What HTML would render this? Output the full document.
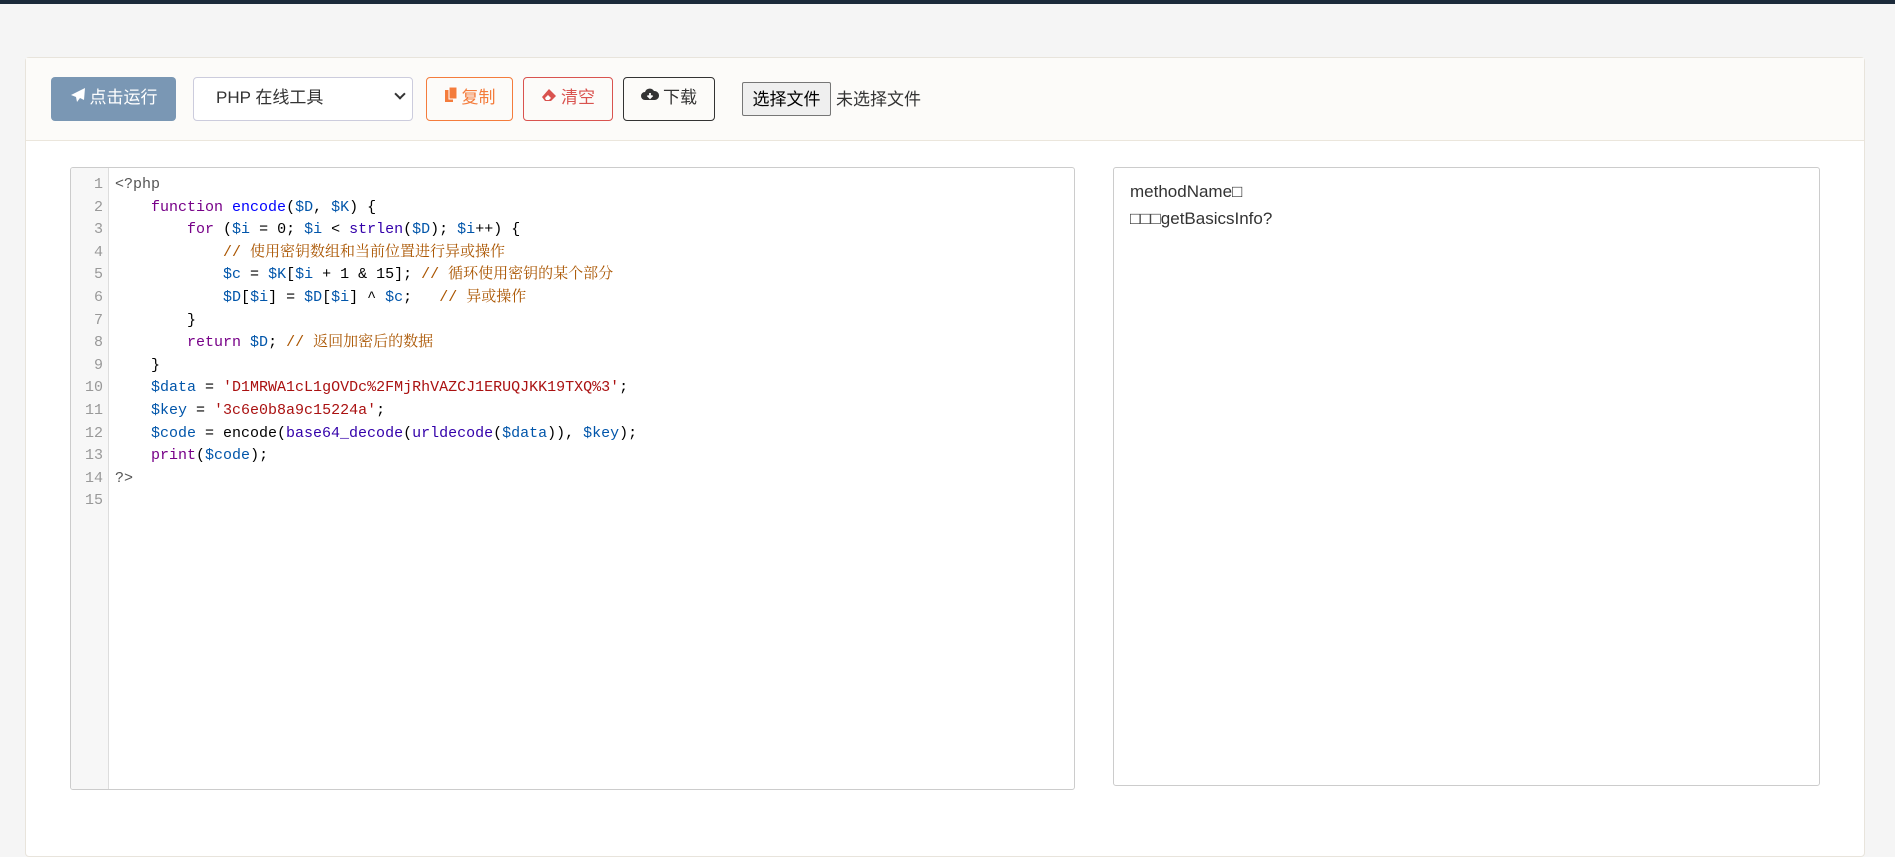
<!DOCTYPE html>
<html><head><meta charset="utf-8">
<style>
*{box-sizing:border-box;margin:0;padding:0}
body{width:1895px;height:816px;background:#f5f5f5;font-family:"Liberation Sans","Noto Sans CJK SC",sans-serif;position:relative;overflow:hidden}
.top{position:absolute;left:0;top:0;width:1895px;height:4px;background:#1c2a3a}
.card{position:absolute;left:25px;top:57px;width:1840px;height:800px;background:#fff;border:1px solid #e8e4dc;border-radius:4px}
.hdr{position:absolute;left:0;top:0;right:0;height:83px;background:#fcfbf9;border-bottom:1px solid #ebe6dc}
.btn{position:absolute;top:19px;height:44px;border-radius:4px;font-size:17px;display:flex;align-items:center;justify-content:center;gap:4px;padding-bottom:8px}
.run{left:25px;width:125px;background:#7a97b4;color:#fff}
.sel{left:167px;width:220px;border:1px solid #ccd;background:#fff;color:#333;justify-content:flex-start;padding-left:22px;font-size:17px}
.sel .ar{position:absolute;right:8px;top:12px;width:8px;height:8px;border-right:2px solid #333;border-bottom:2px solid #333;transform:rotate(45deg)}
.copy{left:400px;width:87px;border:1px solid #f47c3c;color:#f47c3c}
.clr{left:497px;width:90px;border:1px solid #d9534f;color:#d9534f}
.dl{left:597px;width:92px;border:1px solid #333;color:#333}
.file{position:absolute;left:716px;top:24px;width:89px;height:34px;background:#efefef;border:1px solid #767676;border-radius:2px;font-size:17px;color:#000;display:flex;align-items:center;justify-content:center;padding-bottom:4px}
.nf{position:absolute;left:810px;top:27px;font-size:17px;color:#333}
.ed{position:absolute;left:70px;top:167px;width:1005px;height:623px;border:1px solid #ccc;border-radius:3px;background:#fff;overflow:hidden}
.gut{position:absolute;left:0;top:0;width:38px;height:100%;background:#f7f7f7;border-right:1px solid #ddd}
pre{position:absolute;left:44px;top:6px;font-family:"Liberation Mono","Noto Serif CJK SC",monospace;font-size:15px;line-height:22.6px;color:#000}
.gl{position:absolute;left:0;top:6px;font-family:"Liberation Mono",monospace;font-size:15px;line-height:22.6px}
.k{color:#708}.d{color:#00f}.v{color:#05a}.c{color:#a50}.s{color:#a11}.b{color:#30a}.o{color:#555}
.ta{position:absolute;left:1113px;top:167px;width:707px;height:619px;border:1px solid #ccc;border-radius:3px;background:#fff;padding:10px 16px;font-size:17px;line-height:27px;color:#333}
</style></head><body>
<div class="top"></div>
<div class="card"><div class="hdr">
<div class="btn run"><svg width="16" height="16" viewBox="0 0 16 16"><path d="M15 1L1 8l5 2 1 5 3-4 4 2z" fill="#fff"/></svg>点击运行</div>
<div class="btn sel">PHP 在线工具<span class="ar"></span></div>
<div class="btn copy"><svg width="14" height="16" viewBox="0 0 14 16"><rect x="1" y="3" width="8" height="12" fill="#f47c3c"/><rect x="5" y="0" width="8" height="12" fill="#f47c3c" stroke="#fff" stroke-width="1"/></svg>复制</div>
<div class="btn clr"><svg width="16" height="14" viewBox="0 0 16 14"><path d="M1 9l7-8 7 7-5 5H4z" fill="#d9534f"/><path d="M4 10l3-3 3 3-2 2H5z" fill="#fff"/></svg>清空</div>
<div class="btn dl"><svg width="18" height="16" viewBox="0 0 18 16"><path d="M4 13a4 4 0 010-8 5 5 0 019-1 4 4 0 011 9z" fill="#333"/><path d="M9 6v5M6.5 8.5L9 11l2.5-2.5" stroke="#fff" stroke-width="1.8" fill="none"/></svg>下载</div>
<div class="file">选择文件</div><div class="nf">未选择文件</div>
</div></div>
<div class="ed"><div class="gut"><pre class="gl" style="left:0;width:32px;text-align:right;color:#999">1
2
3
4
5
6
7
8
9
10
11
12
13
14
15</pre></div>
<pre><span class="o">&lt;?php</span>
    <span class="k">function</span> <span class="d">encode</span>(<span class="v">$D</span>, <span class="v">$K</span>) {
        <span class="k">for</span> (<span class="v">$i</span> = 0; <span class="v">$i</span> &lt; <span class="b">strlen</span>(<span class="v">$D</span>); <span class="v">$i</span>++) {
            <span class="c">// 使用密钥数组和当前位置进行异或操作</span>
            <span class="v">$c</span> = <span class="v">$K</span>[<span class="v">$i</span> + 1 &amp; 15]; <span class="c">// 循环使用密钥的某个部分</span>
            <span class="v">$D</span>[<span class="v">$i</span>] = <span class="v">$D</span>[<span class="v">$i</span>] ^ <span class="v">$c</span>;   <span class="c">// 异或操作</span>
        }
        <span class="k">return</span> <span class="v">$D</span>; <span class="c">// 返回加密后的数据</span>
    }
    <span class="v">$data</span> = <span class="s">'D1MRWA1cL1gOVDc%2FMjRhVAZCJ1ERUQJKK19TXQ%3'</span>;
    <span class="v">$key</span> = <span class="s">'3c6e0b8a9c15224a'</span>;
    <span class="v">$code</span> = encode(<span class="b">base64_decode</span>(<span class="b">urldecode</span>(<span class="v">$data</span>)), <span class="v">$key</span>);
    <span class="k">print</span>(<span class="v">$code</span>);
<span class="o">?&gt;</span>
</pre></div>
<div class="ta">methodName&#9633;<br>&#9633;&#9633;&#9633;getBasicsInfo?</div>
</body></html>
